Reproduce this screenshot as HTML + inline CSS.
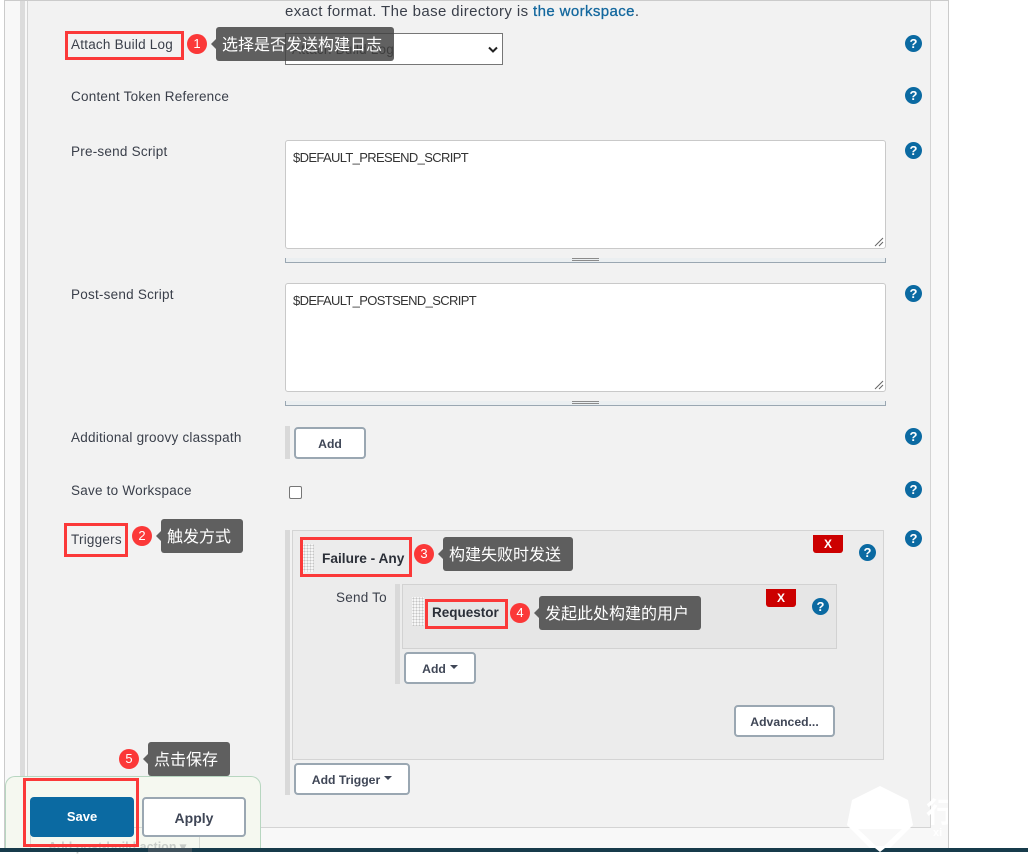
<!DOCTYPE html>
<html><head><meta charset="utf-8"><style>
html,body{margin:0;padding:0;background:#fff}
body{width:1028px;height:852px;position:relative;overflow:hidden;font-family:"Liberation Sans","Noto Sans CJK SC",sans-serif;font-size:14px;color:#333}
div,span,a{position:absolute;box-sizing:border-box;white-space:nowrap}
.l{line-height:18px;color:#3a3f4a;font-size:13.5px;letter-spacing:.23px}
.ta{background:#fff;border:1px solid #c9c9c9;border-radius:3px;left:285px;width:601px;height:109px;padding:8px 7px;font-size:13px;letter-spacing:-.64px;line-height:17px;color:#333}
.gr{left:285px;width:601px;height:5px;background:#ebeff1;border:1px solid #9aa7b2;border-top:0}
.gh{left:572px;width:27px;height:3px;border-top:1px solid #8b8b8b;border-bottom:1px solid #8b8b8b}
.btn{background:#fff;border:2px solid #9aa7b2;border-radius:4px;color:#3f4656;font-weight:bold;font-size:12.2px;text-align:center}
.bar{background:#d9d9d9}
.h{width:17px;height:17px;border-radius:50%;background:#0b6aa2;color:#fff;font-weight:bold;font-size:13px;line-height:17px;text-align:center}
.x{width:30px;height:18px;background:#cc0000;border-radius:0 0 3px 3px;color:#fff;font-weight:bold;font-size:12px;line-height:18px;text-align:center}
.red{border:3px solid #fb3939}
.n{width:20px;height:20px;border-radius:50%;background:#fb3838;color:#fff;font-size:13px;line-height:20px;text-align:center}
.t{height:34px;background:rgba(65,65,65,.83);border-radius:3px;color:#fff;font-size:16px;line-height:37px;padding-left:6px}
.t:before{content:"";position:absolute;left:-5px;top:12px;border:5px solid transparent;border-left:0;border-right-color:#5f5f5f}
.grip{background-image:radial-gradient(#c4c4c4 0.8px,#f7f7f7 0.9px);background-size:3px 3px}
</style></head><body>
<div style="left:4px;top:0;width:945px;height:848px;background:#f8f8f8;border:1px solid #cbcbcb;border-width:1px 1px 0 1px"></div>
<div style="left:20px;top:1px;width:5px;height:826px;background:#dcdcdc"></div>
<div style="left:27px;top:1px;width:904px;height:827px;background:#f2f2f2;border:1px solid #d4d4d4;border-width:0 1px 1px 1px"></div>

<div style="left:285px;top:3px;font-size:15px;letter-spacing:.39px;line-height:18px;color:#3a3f4a">exact format. The base directory is <b style="font-weight:normal;color:#14689e;-webkit-text-stroke:.3px #14689e">the workspace</b>.</div>

<div style="left:285px;top:33px;width:218px;height:32px;background:#fff;border:1px solid #767676;font-size:13.5px;letter-spacing:.23px;line-height:31px;padding-left:6px;color:#333">Attach Build Log
<svg style="position:absolute;left:202px;top:12px" width="10" height="8" viewBox="0 0 10 8"><path d="M1 1.5L5 5.5L9 1.5" fill="none" stroke="#222" stroke-width="2"/></svg></div>

<div class="l" style="left:71px;top:36px">Attach Build Log</div>
<div class="l" style="left:71px;top:88px">Content Token Reference</div>
<div class="l" style="left:71px;top:143px">Pre-send Script</div>
<div class="l" style="left:71px;top:286px">Post-send Script</div>
<div class="l" style="left:71px;top:429px">Additional groovy classpath</div>
<div class="l" style="left:71px;top:482px">Save to Workspace</div>
<div class="l" style="left:71px;top:531px">Triggers</div>

<div class="ta" style="top:140px">$DEFAULT_PRESEND_SCRIPT
<svg style="position:absolute;right:1px;bottom:1px" width="10" height="10"><path d="M1 9L9 1M5 9L9 5" stroke="#666" stroke-width="1"/></svg></div>
<div class="gr" style="top:258px"></div><div class="gh" style="top:258px"></div>
<div class="ta" style="top:283px">$DEFAULT_POSTSEND_SCRIPT
<svg style="position:absolute;right:1px;bottom:1px" width="10" height="10"><path d="M1 9L9 1M5 9L9 5" stroke="#666" stroke-width="1"/></svg></div>
<div class="gr" style="top:401px"></div><div class="gh" style="top:401px"></div>

<div class="bar" style="left:285px;top:426px;width:5px;height:33px"></div>
<div class="btn" style="left:294px;top:427px;width:72px;height:32px;line-height:31px">Add</div>

<div style="left:289px;top:486px;width:13px;height:13px;background:#fff;border:1px solid #767676;border-radius:2px"></div>

<div class="bar" style="left:285px;top:530px;width:5px;height:265px"></div>
<div style="left:292px;top:530px;width:592px;height:230px;background:#ececec;border:1px solid #d4d4d4"></div>
<div class="grip" style="left:303px;top:544px;height:28px;width:11px"></div>
<div style="left:322px;top:550px;font-weight:bold;font-size:13.7px;line-height:18px;color:#2b2f38">Failure - Any</div>
<div class="x" style="left:813px;top:535px">X</div>
<div class="h" style="left:859px;top:544px">?</div>
<div class="l" style="left:336px;top:589px">Send To</div>
<div class="bar" style="left:395px;top:584px;width:5px;height:100px"></div>
<div style="left:402px;top:584px;width:435px;height:65px;background:#e6e6e6;border:1px solid #d2d2d2"></div>
<div class="grip" style="left:412px;top:597px;height:29px;width:12px"></div>
<div style="left:432px;top:604px;font-weight:bold;font-size:13.5px;line-height:18px;color:#2b2f38">Requestor</div>
<div class="x" style="left:766px;top:589px">X</div>
<div class="h" style="left:812px;top:598px">?</div>
<div class="btn" style="left:404px;top:652px;width:72px;height:32px;line-height:31px;padding-right:12px">Add</div>
<div style="left:450px;top:665px;border:4px solid transparent;border-top:4px solid #3f4656;border-bottom:0"></div>
<div class="btn" style="left:734px;top:705px;width:101px;height:32px;line-height:31px">Advanced...</div>
<div class="btn" style="left:294px;top:763px;width:116px;height:32px;line-height:31px;padding-right:12px">Add Trigger</div>
<div style="left:384px;top:776px;border:4px solid transparent;border-top:4px solid #3f4656;border-bottom:0"></div>

<div class="h" style="left:905px;top:35px">?</div>
<div class="h" style="left:905px;top:87px">?</div>
<div class="h" style="left:905px;top:142px">?</div>
<div class="h" style="left:905px;top:285px">?</div>
<div class="h" style="left:905px;top:428px">?</div>
<div class="h" style="left:905px;top:481px">?</div>
<div class="h" style="left:905px;top:530px">?</div>

<!-- bottom bar -->
<div style="left:5px;top:776px;width:256px;height:72px;background:#f5f8f0;border:1px solid #b7d6c0;border-bottom:0;border-radius:10px 10px 0 0"></div>
<div style="left:30px;top:827px;width:170px;height:21px;border:1px solid #d8dcd6;border-bottom:0"></div>
<div style="left:48px;top:840px;font-size:12.5px;font-weight:bold;line-height:14px;color:#c9cdc9">Add post-build action ▾</div>
<div style="left:30px;top:797px;width:104px;height:40px;background:#0b6aa2;border-radius:4px;color:#fff;font-weight:bold;font-size:13px;line-height:40px;text-align:center">Save</div>
<div class="btn" style="left:142px;top:797px;width:104px;height:40px;line-height:38px;font-size:14px">Apply</div>
<div style="left:0;top:848px;width:1028px;height:4px;background:#173b4b"></div>
<div style="left:148px;top:848px;width:44px;height:4px;background:#3f515c"></div>

<!-- watermark -->
<svg style="position:absolute;left:840px;top:780px" width="80" height="72" viewBox="840 780 80 72"><path d="M880 786L908 800L913 825L890 848L885 848L880 852L875 848L870 848L847 825L852 800Z" fill="#fff"/><path d="M858 829L902 829L884 846L876 846Z" fill="#f8f8f8"/></svg>
<div style="left:926px;top:797px;width:22px;height:32px;overflow:hidden;color:#fff;font-size:28px;line-height:32px;font-weight:bold">行</div>
<div style="left:933px;top:826px;width:15px;height:14px;overflow:hidden;color:#fff;font-size:11px;line-height:14px;font-weight:bold">xi</div>

<!-- annotations -->
<div class="red" style="left:65px;top:31px;width:119px;height:29px"></div>
<div class="n" style="left:187px;top:34px">1</div>
<div class="t" style="left:216px;top:27px;width:178px">选择是否发送构建日志</div>
<div class="red" style="left:64px;top:523px;width:64px;height:34px"></div>
<div class="n" style="left:132px;top:526px">2</div>
<div class="t" style="left:161px;top:519px;width:82px">触发方式</div>
<div class="red" style="left:300px;top:537px;width:112px;height:40px"></div>
<div class="n" style="left:414px;top:544px">3</div>
<div class="t" style="left:443px;top:537px;width:130px">构建失败时发送</div>
<div class="red" style="left:425px;top:599px;width:83px;height:30px"></div>
<div class="n" style="left:510px;top:603px">4</div>
<div class="t" style="left:539px;top:596px;width:162px">发起此处构建的用户</div>
<div class="n" style="left:119px;top:749px">5</div>
<div class="t" style="left:148px;top:742px;width:82px">点击保存</div>
<div class="red" style="left:23px;top:778px;width:116px;height:69px"></div>
</body></html>
